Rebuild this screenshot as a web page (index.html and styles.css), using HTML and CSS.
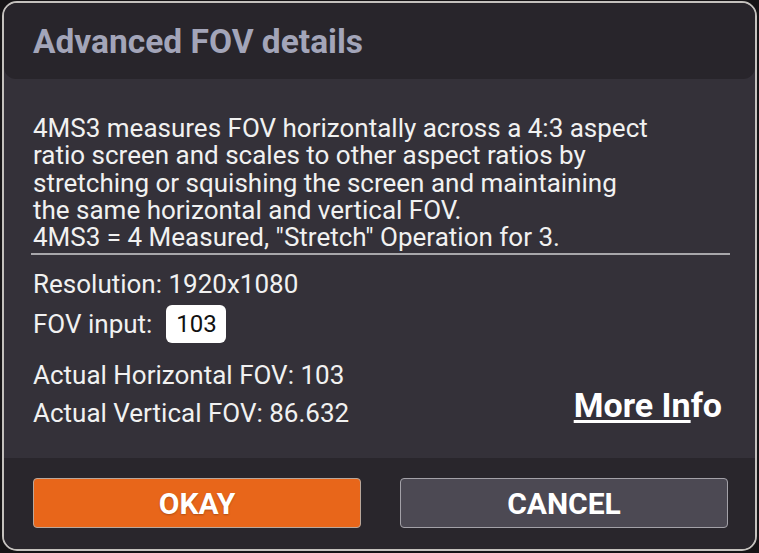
FILE: index.html
```html
<!DOCTYPE html>
<html>
<head>
<meta charset="utf-8">
<link rel="stylesheet" href="styles.css">
</head>
<body>
<div class="dialog">
  <div class="header"><h1 class="title">Advanced FOV details</h1></div>
  <div class="content">
    <p class="desc">4MS3 measures FOV horizontally across a 4:3 aspect<br>ratio screen and scales to other aspect ratios by<br>stretching or squishing the screen and maintaining<br>the same horizontal and vertical FOV.<br>4MS3 = 4 Measured, "Stretch" Operation for 3.</p>
    <div class="rule"></div>
    <div class="line res">Resolution: 1920x1080</div>
    <div class="line fov"><span>FOV input:</span><span class="input">103</span></div>
    <div class="bottom">
      <div class="stats">
        <div class="line">Actual Horizontal FOV: 103</div>
        <div class="line">Actual Vertical FOV: 86.632</div>
      </div>
      <div class="more"><span class="u">More In</span>fo</div>
    </div>
  </div>
  <div class="footer">
    <div class="btn okay">OKAY</div>
    <div class="btn cancel">CANCEL</div>
  </div>
</div>
</body>
</html>
```

FILE: styles.css
```css
html, body {
  margin: 0;
  padding: 0;
}
body {
  width: 759px;
  height: 553px;
  background: #161416;
  font-family: Roboto, "Liberation Sans", sans-serif;
  padding: 1px 0 0 2px;
  box-sizing: border-box;
  overflow: hidden;
}
.dialog {
  width: 755px;
  height: 550px;
  box-sizing: border-box;
  border: 2px solid #c4c1bd;
  border-radius: 15px;
  background: #343139;
  overflow: hidden;
  display: flex;
  flex-direction: column;
}
.header {
  height: 76px;
  flex: none;
  background: #28252b;
  border-radius: 0 0 12px 12px;
  display: flex;
  align-items: center;
  padding-left: 29px;
}
.title {
  margin: 0;
  font-size: 33.5px;
  font-weight: 700;
  color: #a3a5b9;
}
.content {
  flex: 1;
  padding: 36px 33px 0 29px;
  color: #f1f1f1;
}
.desc {
  margin: 0;
  font-size: 26px;
  line-height: 27.3px;
  white-space: nowrap;
}
.rule {
  height: 2px;
  background: #a8a7ab;
  margin: 2px -8px 0 -2px;
}
.line {
  font-size: 26px;
  line-height: 30px;
}
.res {
  margin-top: 14px;
}
.fov {
  display: flex;
  align-items: center;
  gap: 14px;
  margin-top: 6px;
  height: 38px;
}
.input {
  background: #ffffff;
  color: #111;
  border-radius: 6px;
  width: 60px;
  height: 38px;
  display: flex;
  align-items: center;
  justify-content: center;
  font-size: 24px;
}
.bottom {
  display: flex;
  justify-content: space-between;
  align-items: flex-end;
  margin-top: 13px;
}
.stats .line {
  line-height: 38px;
}
.more {
  font-size: 34px;
  line-height: 40px;
  font-weight: 700;
  color: #fff;
  margin-bottom: 7px;
}
.u {
  text-decoration: underline;
  text-decoration-thickness: 3px;
  text-underline-offset: 3px;
}
.footer {
  height: 91px;
  flex: none;
  background: #29262c;
  display: flex;
  justify-content: space-between;
  align-items: flex-start;
  padding: 20px 27px 0 29px;
  box-sizing: border-box;
}
.btn {
  width: 328px;
  height: 50px;
  box-sizing: border-box;
  border-radius: 4px;
  display: flex;
  align-items: center;
  justify-content: center;
  font-size: 30px;
  font-weight: 700;
  color: #fff;
}
.okay {
  background: #e8661a;
  border: 1px solid #b9a79b;
  text-shadow: 0 1px 2px rgba(0,0,0,0.25);
}
.cancel {
  background: #4c4953;
  border: 1px solid #a3a1a8;
}
```
